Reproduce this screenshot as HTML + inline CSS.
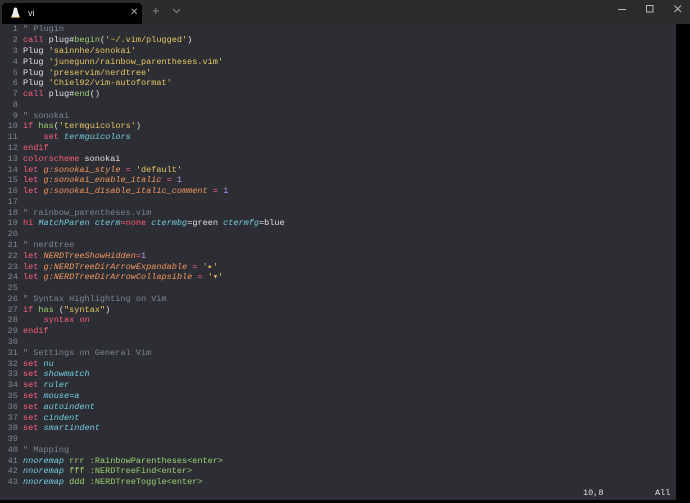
<!DOCTYPE html>
<html><head><meta charset="utf-8"><style>
html,body{margin:0;padding:0;}
body{width:690px;height:503px;background:#000;position:relative;overflow:hidden;font-family:"Liberation Mono",monospace;}
#title{position:absolute;left:0;top:0;width:690px;height:24px;background:#2b2b2b;}
#tab{position:absolute;left:2px;top:3px;width:140px;height:21px;background:#000;border-radius:4px 4px 0 0;}
#tab .t{position:absolute;left:26px;top:5px;color:#ddd;font:9px "Liberation Sans",sans-serif;}
#tab .x{position:absolute;left:128px;top:4px;color:#aaa;font:10px "Liberation Sans",sans-serif;}
#content{position:absolute;left:0;top:24px;width:676px;height:476px;background:#2c2e34;}
pre{position:absolute;left:7.6px;top:24.4px;margin:0;font-size:8.55px;line-height:10.786px;color:#e2e2e3;font-family:"Liberation Mono",monospace;}
.n{color:#7f8490}.c{color:#7f8490}.r{color:#fc5d7c}.g{color:#9ed072}.y{color:#e7c664}.o{color:#f39660;font-style:italic}.b{color:#76cce0;font-style:italic}.p{color:#b39df3}.w{color:#e2e2e3}
.ctl{position:absolute;top:4px;color:#bbb;font:11px "Liberation Sans",sans-serif;}
</style></head><body>
<div id="title">
<div id="tab">
<svg style="position:absolute;left:8px;top:4px" width="11" height="12" viewBox="0 0 11 12"><path d="M5.5 0.5 C3.5 0.5 3.5 3 3.2 5 L1 10.5 L10 10.5 L7.8 5 C7.5 3 7.5 0.5 5.5 0.5Z" fill="#eee"/><path d="M1 10.5 L3 9 L4 11 Z M10 10.5 L8 9 L7 11Z" fill="#e8b020"/></svg>
<span class="t">vi</span><span class="x">✕</span></div>
<span class="ctl" style="left:152px;top:3px;font-size:13px;color:#888">+</span>
<svg style="position:absolute;left:172px;top:8px" width="9" height="6"><path d="M1 1 L4.5 4.5 L8 1" stroke="#888" fill="none"/></svg>
<svg style="position:absolute;left:617px;top:4px" width="10" height="10"><path d="M1 5.5 H9" stroke="#bbb"/></svg>
<svg style="position:absolute;left:645px;top:4px" width="10" height="10"><rect x="1.5" y="1.5" width="6.5" height="6.5" stroke="#bbb" fill="none"/></svg>
<svg style="position:absolute;left:673px;top:4px" width="10" height="10"><path d="M1.5 1.5 L8 8 M8 1.5 L1.5 8" stroke="#bbb"/></svg>
</div>
<div id="content"></div>
<pre><span class="n"> 1 </span><span class="c">" Plugin</span>
<span class="n"> 2 </span><span class="r">call</span> plug#<span class="g">begin</span>(<span class="y">'~/.vim/plugged'</span>)
<span class="n"> 3 </span>Plug <span class="y">'sainnhe/sonokai'</span>
<span class="n"> 4 </span>Plug <span class="y">'junegunn/rainbow_parentheses.vim'</span>
<span class="n"> 5 </span>Plug <span class="y">'preservim/nerdtree'</span>
<span class="n"> 6 </span>Plug <span class="y">'Chiel92/vim-autoformat'</span>
<span class="n"> 7 </span><span class="r">call</span> plug#<span class="g">end</span>()
<span class="n"> 8 </span>
<span class="n"> 9 </span><span class="c">" sonokai</span>
<span class="n">10 </span><span class="r">if</span> <span class="g">has</span>(<span class="y">'termguicolors'</span>)
<span class="n">11 </span>    <span class="r">set</span> <span class="b">termguicolors</span>
<span class="n">12 </span><span class="r">endif</span>
<span class="n">13 </span><span class="r">colorscheme</span> sonokai
<span class="n">14 </span><span class="r">let</span> <span class="o">g:sonokai_style</span> <span class="r">=</span> <span class="y">'default'</span>
<span class="n">15 </span><span class="r">let</span> <span class="o">g:sonokai_enable_italic</span> <span class="r">=</span> <span class="p">1</span>
<span class="n">16 </span><span class="r">let</span> <span class="o">g:sonokai_disable_italic_comment</span> <span class="r">=</span> <span class="p">1</span>
<span class="n">17 </span>
<span class="n">18 </span><span class="c">" rainbow_parentheses.vim</span>
<span class="n">19 </span><span class="r">hi</span> <span class="b">MatchParen</span> <span class="b">cterm</span><span class="r">=none</span> <span class="b">ctermbg</span>=green <span class="b">ctermfg</span>=blue
<span class="n">20 </span>
<span class="n">21 </span><span class="c">" nerdtree</span>
<span class="n">22 </span><span class="r">let</span> <span class="o">NERDTreeShowHidden</span><span class="r">=</span><span class="p">1</span>
<span class="n">23 </span><span class="r">let</span> <span class="o">g:NERDTreeDirArrowExpandable</span> <span class="r">=</span> <span class="y">'▸'</span>
<span class="n">24 </span><span class="r">let</span> <span class="o">g:NERDTreeDirArrowCollapsible</span> <span class="r">=</span> <span class="y">'▾'</span>
<span class="n">25 </span>
<span class="n">26 </span><span class="c">" Syntax Highlighting on Vim</span>
<span class="n">27 </span><span class="r">if</span> <span class="g">has</span> (<span class="y">"syntax"</span>)
<span class="n">28 </span>    <span class="r">syntax</span> <span class="r">on</span>
<span class="n">29 </span><span class="r">endif</span>
<span class="n">30 </span>
<span class="n">31 </span><span class="c">" Settings on General Vim</span>
<span class="n">32 </span><span class="r">set</span> <span class="b">nu</span>
<span class="n">33 </span><span class="r">set</span> <span class="b">showmatch</span>
<span class="n">34 </span><span class="r">set</span> <span class="b">ruler</span>
<span class="n">35 </span><span class="r">set</span> <span class="b">mouse=a</span>
<span class="n">36 </span><span class="r">set</span> <span class="b">autoindent</span>
<span class="n">37 </span><span class="r">set</span> <span class="b">cindent</span>
<span class="n">38 </span><span class="r">set</span> <span class="b">smartindent</span>
<span class="n">39 </span>
<span class="n">40 </span><span class="c">" Mapping</span>
<span class="n">41 </span><span class="b">nnoremap</span> <span class="g">rrr :RainbowParentheses&lt;enter&gt;</span>
<span class="n">42 </span><span class="b">nnoremap</span> <span class="g">fff :NERDTreeFind&lt;enter&gt;</span>
<span class="n">43 </span><span class="b">nnoremap</span> <span class="g">ddd :NERDTreeToggle&lt;enter&gt;</span>
</pre>
<pre style="left:583px;top:488px">10,8</pre>
<pre style="left:655px;top:488px">All</pre>
</body></html>
